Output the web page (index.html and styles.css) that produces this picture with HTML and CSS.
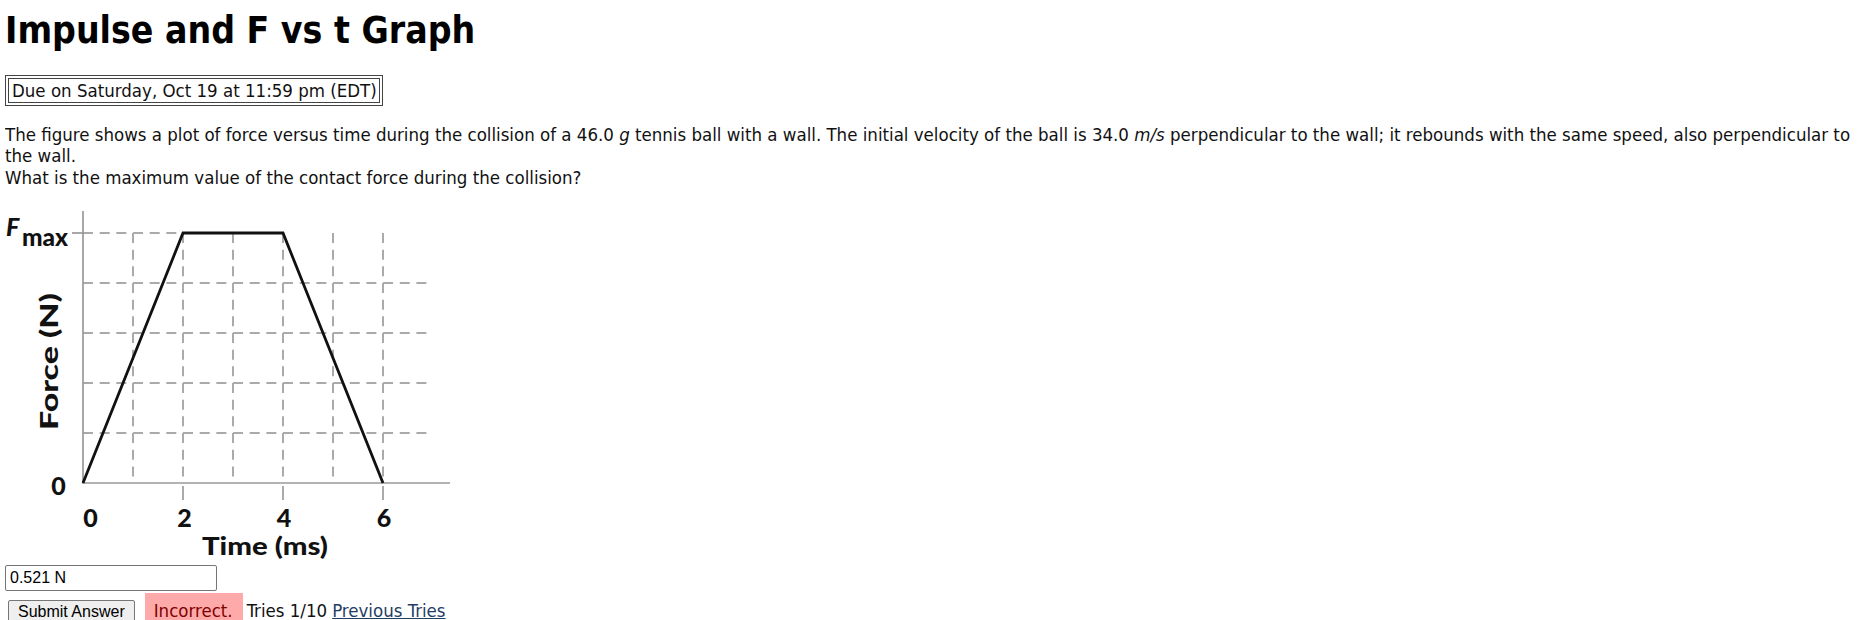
FILE: index.html
```html
<!DOCTYPE html>
<html lang="en">
<head>
<meta charset="utf-8">
<title>Impulse and F vs t Graph</title>
<link rel="stylesheet" href="styles.css">
</head>
<body>
<h1 class="title">Impulse and F vs t Graph</h1>
<div class="due">Due on Saturday, Oct 19 at 11:59 pm (EDT)</div>
<p class="question">The figure shows a plot of force versus time during the collision of a 46.0 <i>g</i> tennis ball with a wall. The initial velocity of the ball is 34.0 <i>m/s</i> perpendicular to the wall; it rebounds with the same speed, also perpendicular to the wall.<br>What is the maximum value of the contact force during the collision?</p>
<svg class="graph" width="460" height="363" viewBox="5 200 460 363" xmlns="http://www.w3.org/2000/svg">
  <g class="grid">
    <line x1="83" y1="233" x2="183" y2="233"/>
    <line x1="83" y1="283" x2="433" y2="283"/>
    <line x1="83" y1="333" x2="433" y2="333"/>
    <line x1="83" y1="383" x2="433" y2="383"/>
    <line x1="83" y1="433" x2="433" y2="433"/>
    <line x1="133" y1="233" x2="133" y2="483"/>
    <line x1="183" y1="233" x2="183" y2="483"/>
    <line x1="233" y1="233" x2="233" y2="483"/>
    <line x1="283" y1="233" x2="283" y2="483"/>
    <line x1="333" y1="233" x2="333" y2="483"/>
    <line x1="383" y1="233" x2="383" y2="483"/>
  </g>
  <g class="ticks">
    <line x1="183" y1="486" x2="183" y2="500"/>
    <line x1="283" y1="486" x2="283" y2="500"/>
    <line x1="383" y1="486" x2="383" y2="500"/>
  </g>
  <g class="axes">
    <line x1="83" y1="211" x2="83" y2="483"/>
    <line x1="82" y1="483" x2="450" y2="483"/>
    <line x1="72" y1="233" x2="83" y2="233"/>
  </g>
  <polyline class="curve" points="83,483 183,233 283,233 383,483"/>
  <g class="labels">
    <text class="fmax-f" x="6" y="236">F</text>
    <text class="fmax-sub" x="22" y="246" textLength="46" lengthAdjust="spacingAndGlyphs">max</text>
    <text class="num" x="58.5" y="495">0</text>
    <text class="num" x="90.5" y="527">0</text>
    <text class="num" x="184.5" y="527">2</text>
    <text class="num" x="284" y="527">4</text>
    <text class="num" x="384" y="527">6</text>
    <text class="axis-title" x="202" y="555" textLength="126" lengthAdjust="spacingAndGlyphs">Time (ms)</text>
    <text class="axis-title" transform="translate(58 430) rotate(-90)" x="0" y="0" textLength="137" lengthAdjust="spacingAndGlyphs">Force (N)</text>
  </g>
</svg>
<input class="answer" type="text" value="0.521 N">
<div class="actions">
  <button class="submit" type="button">Submit Answer</button>
  <span class="incorrect">Incorrect.</span>
  <span class="tries">Tries 1/10</span>
  <a class="prev" href="#">Previous Tries</a>
</div>
</body>
</html>
```
FILE: styles.css
```css
html, body {
  background: #fff;
}
body {
  margin: 0 5px;
  font-family: "DejaVu Sans Condensed", "DejaVu Sans", sans-serif;
  font-stretch: condensed;
  font-size: 18.5px;
  color: #111;
}
.title {
  margin: 11px 0 0;
  font-size: 37px;
  line-height: 40px;
  font-weight: bold;
  color: #000;
}
.due {
  width: fit-content;
  margin-top: 24px;
  border: 4px double #444;
  padding: 2px 2px 2px 3px;
  line-height: 19px;
}
.question {
  margin: 17.6px 0 0;
  line-height: 21.7px;
}
.graph {
  display: block;
  margin-top: 11px;
}
.grid line {
  stroke: #aaa;
  stroke-width: 2;
  stroke-dasharray: 10 6.67;
}
.ticks line {
  stroke: #aaa;
  stroke-width: 2;
}
.axes line {
  stroke: #999;
  stroke-width: 1.7;
}
.curve {
  fill: none;
  stroke: #111;
  stroke-width: 2.8;
  stroke-linejoin: miter;
}
.labels text {
  font-family: Lato, "DejaVu Sans", sans-serif;
  font-weight: 900;
  fill: #111;
}
.fmax-f {
  font-size: 25px;
  font-style: italic;
}
.fmax-sub {
  font-size: 24px;
}
.num {
  font-size: 25px;
  text-anchor: middle;
}
.axis-title {
  font-size: 25px;
}
.answer {
  display: block;
  box-sizing: border-box;
  width: 212px;
  height: 26px;
  margin: 2px 0 0;
  padding: 2px 4px;
  border: 1px solid #767676;
  border-radius: 2px;
  font-family: "Liberation Sans", Arial, sans-serif;
  font-size: 16px;
  color: #000;
  background: #fff;
}
.actions {
  display: flex;
  align-items: baseline;
  margin-top: 2px;
  line-height: 21.7px;
}
.submit {
  margin: 0 0 0 3px;
  padding: 2px 9px 1px;
  border: 1px solid #767676;
  border-radius: 2px;
  background: #efefef;
  font-family: "Liberation Sans", Arial, sans-serif;
  font-size: 16px;
  line-height: normal;
  color: #000;
}
.incorrect {
  margin-left: 10px;
  padding: 7px 10px 4px 9px;
  background: #ffaaaa;
  color: #800000;
}
.tries {
  margin-left: 4px;
}
.prev {
  margin-left: 5px;
  color: #1f3e64;
  text-decoration: underline;
}
```
